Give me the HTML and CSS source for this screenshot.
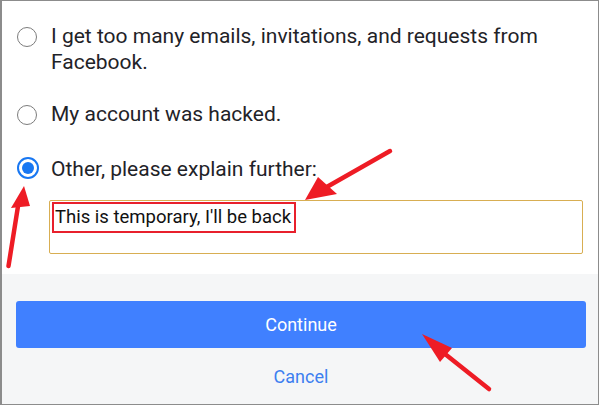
FILE: index.html
```html
<!DOCTYPE html>
<html>
<head>
<meta charset="utf-8">
<link rel="stylesheet" href="styles.css">
</head>
<body>
<div class="frame">
  <div class="form">
    <div class="option opt1">
      <span class="radio"></span>
      <span class="label">I get too many emails, invitations, and requests from Facebook.</span>
    </div>
    <div class="option opt2">
      <span class="radio"></span>
      <span class="label">My account was hacked.</span>
    </div>
    <div class="option opt3">
      <span class="radio checked"></span>
      <span class="label">Other, please explain further:</span>
    </div>
    <div class="textbox"><span class="highlight">This is temporary, I'll be back</span></div>
  </div>
  <div class="actions">
    <div class="btn">Continue</div>
    <div class="cancel">Cancel</div>
  </div>
  <svg class="arrows" width="600" height="406" viewBox="0 0 600 406">
    <g stroke="#ee1c25" stroke-width="4.5" stroke-linecap="round" fill="none">
      <line x1="8.5" y1="266" x2="19" y2="200"/>
      <line x1="390" y1="151" x2="325" y2="188"/>
      <line x1="489" y1="389" x2="440" y2="350"/>
    </g>
    <g fill="#ee1c25">
      <polygon points="24,186 30,206 11,208"/>
      <polygon points="305,200 318,177 337,194"/>
      <polygon points="422,334 452,348 440,362"/>
    </g>
  </svg>
</div>
</body>
</html>
```
FILE: styles.css
```css
html, body {
  margin: 0;
  padding: 0;
  background: #ffffff;
}

.frame {
  position: relative;
  width: 599px;
  height: 405px;
  box-sizing: border-box;
  border: 1px solid #8c8c8c;
  border-left-width: 2px;
  display: flex;
  flex-direction: column;
  font-family: Roboto, "Liberation Sans", Arial, sans-serif;
  overflow: hidden;
}

.form {
  height: 273px;
  background: #ffffff;
  padding-top: 22px;
  box-sizing: border-box;
}

.option {
  display: flex;
  align-items: flex-start;
  padding-left: 15px;
  color: #1f2328;
  font-size: 21px;
  line-height: 26px;
}

.opt2 { margin-top: 26px; }
.opt3 { margin-top: 29px; }

.radio {
  flex: none;
  width: 20px;
  height: 20px;
  box-sizing: border-box;
  border: 1.6px solid #7c7c7c;
  border-radius: 50%;
  margin-top: 4px;
  margin-right: 14px;
}

.radio.checked {
  width: 22px;
  height: 22px;
  margin-top: 1px;
  margin-right: 12px;
  border: 2.5px solid #1877f2;
  display: flex;
  align-items: center;
  justify-content: center;
}

.radio.checked::after {
  content: "";
  width: 12px;
  height: 12px;
  border-radius: 50%;
  background: #1877f2;
}

.label {
  width: 520px;
}

.textbox {
  margin: 18px 0 0 47px;
  width: 534px;
  height: 54px;
  box-sizing: border-box;
  border: 1px solid #d8ae52;
  border-radius: 2px;
  padding: 1px 0 0 2px;
  font-size: 18.5px;
  line-height: 24px;
  color: #111111;
}

.highlight {
  display: inline-block;
  border: 2px solid #e8202c;
  padding: 1px 3px 2px 1px;
}

.actions {
  flex: 1;
  background: #f5f6f7;
  padding: 27px 12px 0 14px;
  display: flex;
  flex-direction: column;
  align-items: stretch;
}

.btn {
  height: 47px;
  border-radius: 3px;
  background: #4080ff;
  color: #ffffff;
  font-size: 18px;
  display: flex;
  align-items: center;
  justify-content: center;
}

.cancel {
  margin-top: 19px;
  text-align: center;
  color: #3d7ff0;
  font-size: 18px;
  line-height: 20px;
}

.arrows {
  position: absolute;
  left: -2px;
  top: -1px;
  pointer-events: none;
}
```
